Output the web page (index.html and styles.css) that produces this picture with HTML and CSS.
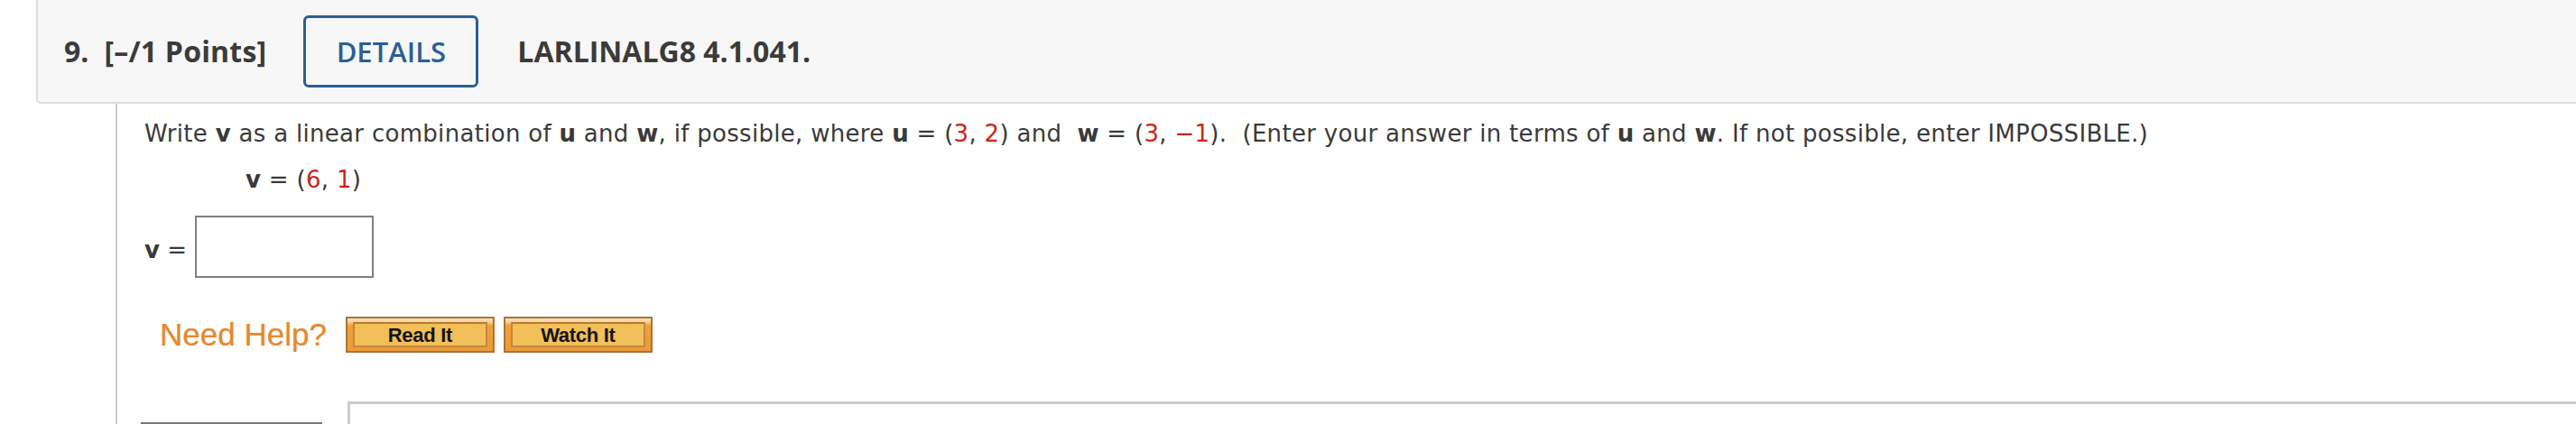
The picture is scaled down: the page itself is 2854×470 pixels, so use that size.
FILE: index.html
```html
<!DOCTYPE html>
<html lang="en">
<head>
<meta charset="utf-8">
<title>Question 9</title>
<link rel="stylesheet" href="styles.css">
</head>
<body>
<div class="page">
  <div class="qhead">
    <span class="qnum">9.</span>
    <span class="qpts">[–/1 Points]</span>
    <span class="details">DETAILS</span>
    <span class="qref">LARLINALG8 4.1.041.</span>
  </div>
  <div class="qbody">
    <p class="prompt">Write <b>v</b> as a linear combination of <b>u</b> and <b>w</b>, if possible, where <b>u</b> = (<span class="num">3</span>, <span class="num">2</span>) and&nbsp; <b>w</b> = (<span class="num">3</span>, <span class="num">−1</span>).&nbsp; (Enter your answer in terms of <b>u</b> and <b>w</b>. If not possible, enter IMPOSSIBLE.)</p>
    <p class="given"><b>v</b> = (<span class="num">6</span>, <span class="num">1</span>)</p>
    <div class="answer">
      <span class="lbl"><b>v</b> =</span>
      <span class="box"></span>
    </div>
    <div class="help">
      <span class="needhelp">Need Help?</span>
      <span class="hbtn"><span class="hbtn-in">Read It</span></span>
      <span class="hbtn"><span class="hbtn-in">Watch It</span></span>
    </div>
    <div class="bottom">
      <div class="stub"></div>
      <div class="panel"></div>
    </div>
  </div>
</div>
</body>
</html>
```

FILE: styles.css
```css
html, body {
  margin: 0;
  padding: 0;
  background: #ffffff;
}
body {
  width: 2854px;
  height: 470px;
  overflow: hidden;
}
.page {
  display: flex;
  flex-direction: column;
  height: 470px;
}
.qhead {
  margin-left: 40px;
  height: 113px;
  background: #f7f7f7;
  border-left: 2px solid #dedede;
  border-bottom: 2px solid #dedede;
  border-bottom-left-radius: 5px;
  display: flex;
  align-items: center;
  padding-left: 29px;
  font-family: "Open Sans", "Liberation Sans", sans-serif;
  font-size: 32px;
  font-weight: 700;
  color: #3b3b3b;
  flex: none;
}
.qpts {
  margin-left: 17px;
  letter-spacing: 0.2px;
}
.details {
  margin-left: 41px;
  width: 194px;
  height: 80px;
  box-sizing: border-box;
  border: 3px solid #2b5f94;
  border-radius: 6px;
  display: flex;
  align-items: center;
  justify-content: center;
  color: #2b5f94;
  font-weight: 600;
  font-size: 31px;
}
.qref {
  margin-left: 43px;
}
.qbody {
  flex: 1;
  min-height: 0;
  overflow: hidden;
  margin-left: 128px;
  border-left: 2px solid #cccccc;
  padding-left: 30px;
  font-family: "DejaVu Sans", Verdana, sans-serif;
  font-size: 26px;
  line-height: 39px;
  color: #3a3a3a;
  display: flex;
  flex-direction: column;
}
.qbody b {
  font-weight: 700;
}
.num {
  color: #c9261c;
}
.prompt {
  margin: 14px 0 0 0;
  white-space: nowrap;
  letter-spacing: 0.3px;
}
.given {
  margin: 12px 0 0 112px;
  letter-spacing: 0.3px;
}
.answer {
  margin-top: 20px;
  display: flex;
  align-items: flex-end;
  gap: 9px;
}
.lbl {
  margin-bottom: 11px;
}
.box {
  width: 198px;
  height: 69px;
  box-sizing: border-box;
  border: 2px solid #808080;
  background: #ffffff;
}
.help {
  margin-top: 43px;
  display: flex;
  align-items: center;
  height: 40px;
  flex: none;
}
.needhelp {
  margin-left: 17px;
  margin-right: 21px;
  font-family: "Liberation Sans", Arial, sans-serif;
  font-size: 35px;
  line-height: 40px;
  color: #e38a32;
  text-shadow: 0 0 1px rgba(227, 138, 50, 0.6);
}
.hbtn {
  width: 165px;
  height: 40px;
  box-sizing: border-box;
  border: 2px solid #a8743a;
  background: linear-gradient(#fde3b8 0, #fbd29a 10%, #ef9f3f 22%, #ec9a38 100%);
  padding: 4px 6px 4px 6px;
  display: flex;
  margin-right: 10px;
}
.hbtn-in {
  flex: 1;
  box-sizing: border-box;
  border: 2px solid #c2883e;
  border-top-color: #b57c36;
  background: #f2bf58;
  display: flex;
  align-items: center;
  justify-content: center;
  font-family: "Liberation Sans", Arial, sans-serif;
  font-weight: 700;
  font-size: 22px;
  color: #141414;
  letter-spacing: -0.3px;
}
.bottom {
  margin-top: 54px;
  display: flex;
  flex: 1;
  min-height: 0;
}
.stub {
  margin-left: -4px;
  margin-top: 23px;
  width: 201px;
  border-top: 3px solid #777777;
}
.panel {
  margin-left: 28px;
  flex: 1;
  border-top: 3px solid #cccccc;
  border-left: 3px solid #cccccc;
}
```
